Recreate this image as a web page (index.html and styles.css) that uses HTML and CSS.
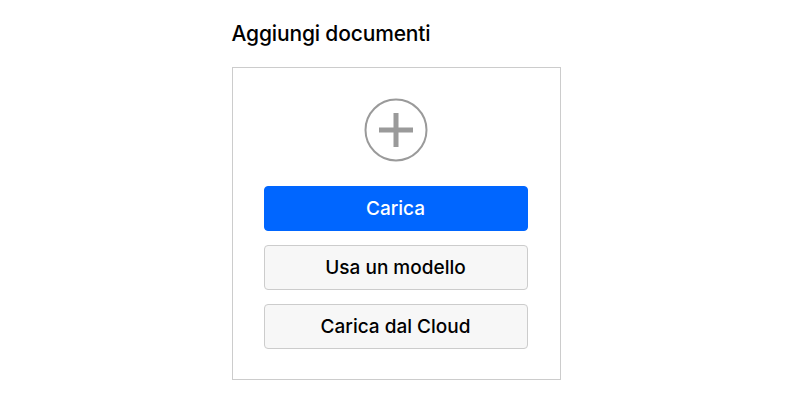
FILE: index.html
```html
<!DOCTYPE html>
<html lang="it">
<head>
<meta charset="utf-8">
<title>Aggiungi documenti</title>
<link rel="stylesheet" href="styles.css">
</head>
<body>
<main class="page">
  <section class="panel">
    <h1 class="title">Aggiungi documenti</h1>
    <div class="dropzone">
      <svg class="add-icon" width="64" height="64" viewBox="0 0 64 64" aria-hidden="true">
        <circle cx="32" cy="32" r="30.5" fill="none" stroke="#9a9a9a" stroke-width="2"/>
        <rect x="15" y="29.5" width="34" height="5" fill="#9a9a9a"/>
        <rect x="29.5" y="15" width="5" height="34" fill="#9a9a9a"/>
      </svg>
      <button class="btn btn-primary">Carica</button>
      <button class="btn btn-secondary">Usa un modello</button>
      <button class="btn btn-secondary">Carica dal Cloud</button>
    </div>
  </section>
</main>
</body>
</html>
```
FILE: styles.css
```css
* { box-sizing: border-box; }
html, body { margin: 0; padding: 0; background: #fff; }
body { font-family: Inter, "Noto Sans", "Liberation Sans", sans-serif; color: #000; }
.page { display: flex; justify-content: center; padding-top: 21px; }
.panel { width: 329px; }
.title {
  margin: 0 0 20px 0;
  font-size: 21px;
  font-weight: 500;
  line-height: 26px;
  color: #000;
  letter-spacing: -0.15px;
}
.dropzone {
  border: 1px solid #cccccc;
  padding: 30px 32px 30px 31px;
  display: flex;
  flex-direction: column;
  align-items: stretch;
  gap: 14px;
}
.add-icon { align-self: center; margin-bottom: 10px; }
.btn {
  height: 45px;
  padding-bottom: 2px;
  border-radius: 4px;
  font-family: inherit;
  font-size: 19px;
  font-weight: 500;
  cursor: pointer;
}
.btn-primary { background: #0066ff; color: #fff; border: 1px solid #0066ff; }
.btn-secondary { background: #f7f7f7; color: #000; border: 1px solid #cccccc; }
```
